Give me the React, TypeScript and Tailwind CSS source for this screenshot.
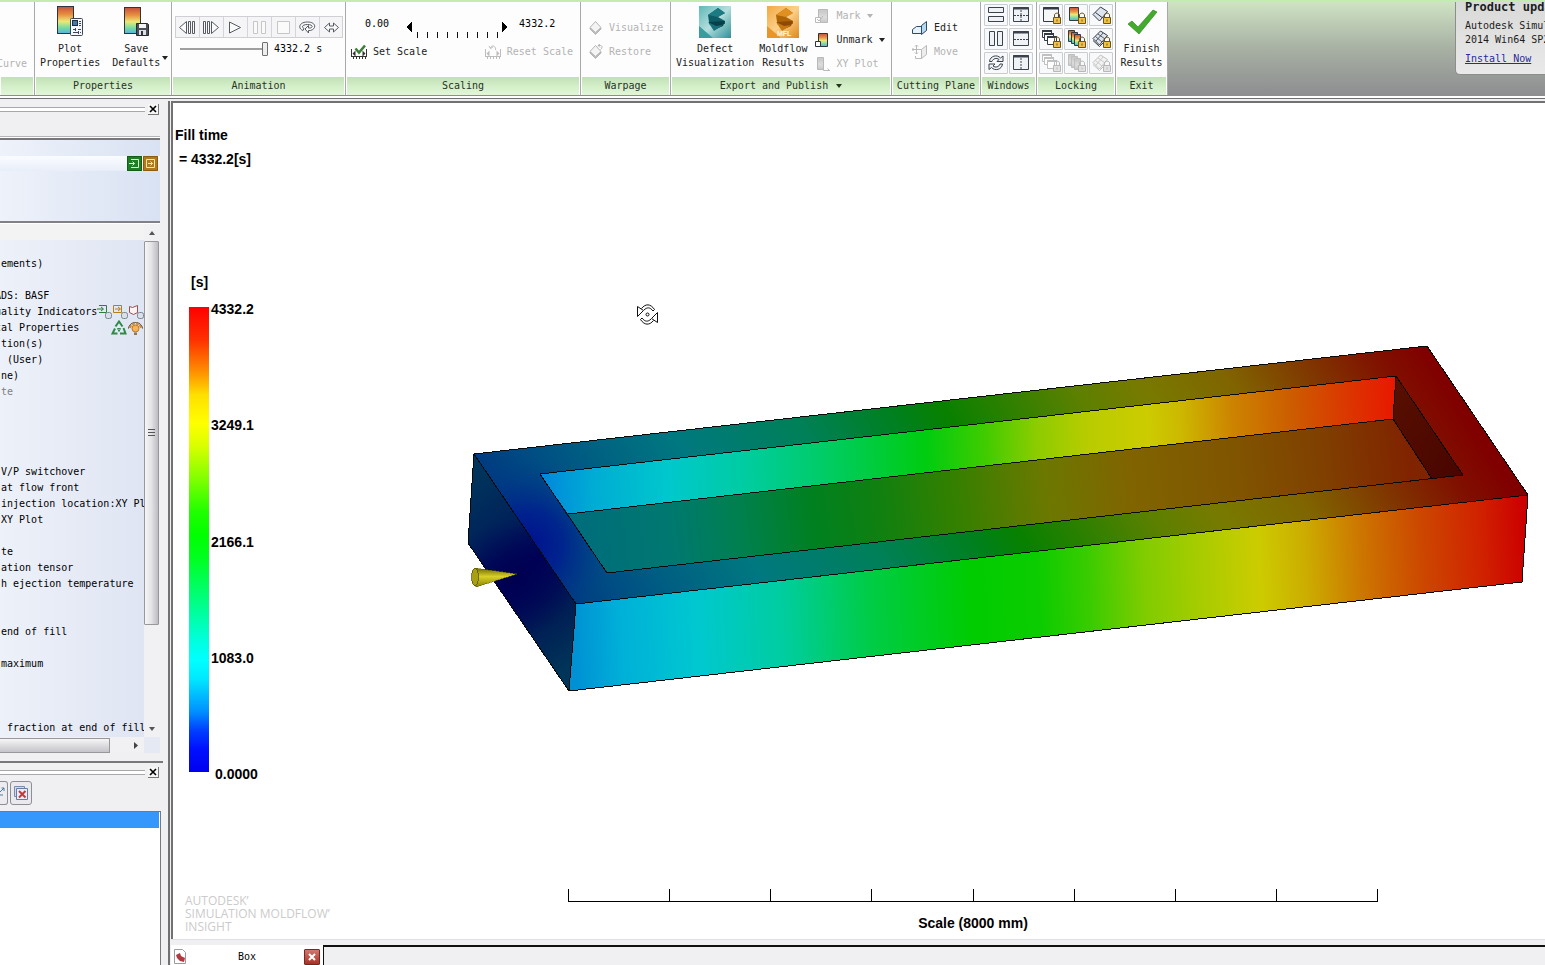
import React from "react";

type Kids = { children?: React.ReactNode };

/* ---------- small shared pieces ---------- */

function Caret() {
  return (
    <svg width="6" height="4" viewBox="0 0 6 4" className="shrink-0" aria-hidden="true">
      <path d="M0 0h6L3 4z" fill="currentColor" />
    </svg>
  );
}

function Group({ title, width, children, menu }: Kids & { title: string; width: string; menu?: boolean }) {
  return (
    <section className={`flex shrink-0 flex-col overflow-hidden border-r border-[#a9a9a9] bg-[#fdfdfd] ${width}`}>
      <div className="h-[75px]">{children}</div>
      <h2 className="mx-px flex h-[18px] items-center justify-center gap-2 whitespace-nowrap bg-linear-to-b from-[#c3dfb9] via-[#d3efc8] to-[#e2f6d8] text-[#27331f]">
        {title}
        {menu && <Caret />}
      </h2>
    </section>
  );
}

function Tool({ icon, label, off, menu }: { icon: React.ReactNode; label: string; off?: boolean; menu?: boolean }) {
  return (
    <button
      disabled={off}
      className={`flex h-6 items-center gap-[6px] whitespace-nowrap ${off ? "text-[#b3b3b3]" : "text-[#222]"}`}
    >
      {icon}
      <span>{label}</span>
      {menu && <Caret />}
    </button>
  );
}

function Big({ icon, lines, menu }: { icon: React.ReactNode; lines: string[]; menu?: boolean }) {
  return (
    <button className="flex flex-col items-center pt-1 leading-[14px] text-[#222]">
      <span className="flex h-9 items-start">{icon}</span>
      <span>{lines[0]}</span>
      <span className={menu ? "-mr-2 flex items-start gap-[2px]" : ""}>
        {lines[1]}
        {menu && <Caret />}
      </span>
    </button>
  );
}

/* ---------- icons ---------- */

function Rainbow({ id, dim }: { id: string; dim?: boolean }) {
  return (
    <linearGradient id={id} x1="0" y1="0" x2="0" y2="1">
      <stop offset="0" stopColor={dim ? "#c8c8c8" : "#c4503c"} />
      <stop offset=".3" stopColor={dim ? "#d0d0d0" : "#e89040"} />
      <stop offset=".55" stopColor={dim ? "#dcdcdc" : "#ece878"} />
      <stop offset=".78" stopColor={dim ? "#d4d4d4" : "#78dca0"} />
      <stop offset="1" stopColor={dim ? "#c4c4c4" : "#58b0e0"} />
    </linearGradient>
  );
}

function PlotPropertiesIcon() {
  return (
    <svg width="28" height="32" viewBox="0 0 28 32">
      <defs><Rainbow id="pp" /></defs>
      <rect x="1.500" y=".5" width="16" height="27" fill="url(#pp)" stroke="#30343c" />
      <rect x="14.500" y="12.500" width="12" height="17" rx="1" fill="#f4f8fb" stroke="#3c4654" />
      <rect x="16.500" y="14.500" width="5" height="5" fill="#4878a4" stroke="#1c2c44" />
      <path d="M23 15.500h2M23 17.500h2M23 19.500h2M17 23.500h3M22 23.500h3M17 26.500h5M24 26.500h1" stroke="#3c4654" />
      <path d="M19.500 22v3M22.500 25v3" stroke="#3c4654" />
    </svg>
  );
}

function SaveDefaultsIcon() {
  return (
    <svg width="28" height="32" viewBox="0 0 28 32">
      <defs><Rainbow id="sd" /></defs>
      <rect x="2.500" y="1.500" width="16" height="26" fill="url(#sd)" stroke="#30343c" />
      <path d="M14.500 17.500h11l1 1v11h-12z" fill="#4a4e56" stroke="#26282e" />
      <path d="M17 18h7v4h-7z" fill="#f4f4f4" />
      <path d="M17 24h7v5h-7z" fill="#dcdfe4" />
      <path d="M19 25h2v4h-2z" fill="#30343c" />
    </svg>
  );
}

const playerIcons: { name: string; off?: boolean; d: string }[] = [
  { name: "Step back", d: "M10.500 4.500v12L3.500 10.500zM12.500 4.500h2v12h-2zM16.500 4.500h2v12h-2z" },
  { name: "Step forward", d: "M3.500 4.500h2v12h-2zM7.500 4.500h2v12h-2zM11.500 4.500v12l7-6z" },
  { name: "Play", d: "M5.500 5v11l11-5.500z" },
  { name: "Pause", off: true, d: "M5.500 4.500h4v12h-4zM13.500 4.500h4v12h-4z" },
  { name: "Stop", off: true, d: "M5.500 4.500h12v12h-12z" },
  { name: "Loop", d: "M7 13.500C1.500 11.500 3 5 11.500 5s9.500 6.500 3 8.500h-2V16L9 12l3.500-3.500v2.500h2c3-1 2-3.500-3-3.500S5 10 8 11.500z" },
  { name: "Bounce", d: "M4.500 10.500l5-4.500v3h4V6l5 4.500-5 4.500v-3h-4v3z" },
];

function SetScaleIcon({ off }: { off?: boolean }) {
  const c = off ? "#bdbdbd" : "#333";
  return (
    <svg width="16" height="16" viewBox="0 0 16 16" fill="none" stroke={c}>
      <path d="M.5 5v8M15.500 5v8M0 12.500h16M2.500 13v2M5.500 13v2M8.500 13v2M11.500 13v2M14.500 13v2" />
      <path d="M1.500 9.500l3-3v6zM14.500 9.500l-3-3v6z" fill={c} stroke="none" />
      {off ? (
        <path d="M5.500 4.500c0-4 6-3 5 1.500M4 2l1.500 2.500L8 3" />
      ) : (
        <path d="M4.500 4.500l3.500 4L14 1.500" stroke="#3f7d3a" strokeWidth="2.500" />
      )}
    </svg>
  );
}

function DiamondIcon({ arrow }: { arrow?: boolean }) {
  return (
    <svg width="14" height="16" viewBox="0 0 14 16" fill="none" stroke="#b5b5b5">
      <path d="M6.500 1.500l5.500 6-5.500 5-5.500-5z" fill="#f4f4f4" />
      <path d="M1 8l5.500 5L12 8v1l-5.500 5.500L1 9z" fill="#c2c2c2" />
      {arrow && <path d="M9 1.500h2.500c2 0 2 3 0 4M11 0L9 1.500 11 3.500" />}
    </svg>
  );
}

function BladeIcon({ warm }: { warm?: boolean }) {
  const id = warm ? "warm" : "cool";
  return (
    <svg width="32" height="32" viewBox="0 0 32 32">
      <defs>
        <linearGradient id={id} x1="0" y1="0" x2="1" y2="1">
          <stop offset="0" stopColor={warm ? "#f2a840" : "#5fb8b8"} />
          <stop offset=".5" stopColor={warm ? "#fbd08a" : "#b4dedd"} />
          <stop offset="1" stopColor={warm ? "#e08818" : "#2f9096"} />
        </linearGradient>
      </defs>
      <path d="M0 0h32v32H0z" fill={`url(#${id})`} />
      <path d="M0 20L14 32H0z" fill={warm ? "#e8962c" : "#3a9c9f"} />
      <path d="M19 2L9 9l1 7 9 1 7 1v-3l-7-4 7-4z" fill={warm ? "#b06408" : "#0d5d66"} />
      <path d="M19 2L9 9l10 2 7-4z" fill={warm ? "#e09020" : "#1c7a82"} />
      <path d="M10 16l16-1-2 5-9 4 1-4-6-2z" fill={warm ? "#8c4a04" : "#083f48"} />
      <path d="M9 16l8 4 7-1-9 6z" fill={warm ? "#c87810" : "#18707a"} />
      {warm && (
        <text x="10" y="30" fontSize="7" fontWeight="700" fill="#fff6dc" fontFamily="Liberation Sans, sans-serif">MFL</text>
      )}
    </svg>
  );
}

function MarkIcon({ off, axis }: { off?: boolean; axis?: boolean }) {
  const id = axis ? "mkx" : off ? "mko" : "mk";
  return (
    <svg width="15" height="16" viewBox="0 0 15 16" fill="none" stroke={off ? "#b9b9b9" : "#2c3440"}>
      <defs><Rainbow id={id} dim={off} /></defs>
      {axis ? (
        <>
          <path d="M2.500 1.500h6v12h-6z" fill={`url(#${id})`} />
          <path d="M8.500 6v8.500H15M12.500 12.500l2 2" />
        </>
      ) : (
        <>
          <path d="M3.500 1.500h9v13h-9z" fill={`url(#${id})`} />
          <path d="M.5 9.500h5v5h-5z" fill="#fff" />
          {off && <path d="M2 11l2 2 4-5" />}
        </>
      )}
    </svg>
  );
}

function PlaneIcon({ move }: { move?: boolean }) {
  return (
    <svg width="16" height="16" viewBox="0 0 16 16" fill="none" stroke={move ? "#b9b9b9" : "#2c4a6c"}>
      {!move && <path d="M.5 9.500l4-3h6v7H.5z" fill="#e6f2fa" />}
      <path d="M9.500 5.500l5-4v9l-5 4z" fill={move ? "#ededed" : "#b4d8ee"} />
      {move && <path d="M4.500 1v9M0 5.500h9M3 2.500L4.500 1 6 2.500M3 8.500L4.500 10 6 8.500M1.500 4L0 5.500 1.500 7M3.500 12v2.500h6" />}
    </svg>
  );
}

const windowIcons: { name: string; node: React.ReactNode }[] = [
  { name: "Tile horizontally", node: <path d="M3.500 2.500h15v5h-15zM3.500 11.500h15v5h-15z" /> },
  { name: "Split both", node: <><path d="M3.500 2.500h15v14h-15z" /><path d="M3 3.500h16" strokeWidth="2" /><path d="M11 5v12M4 10.500h14" strokeDasharray="2 1" /></> },
  { name: "Tile vertically", node: <path d="M4.500 2.500h5v14h-5zM12.500 2.500h5v14h-5z" /> },
  { name: "Split horizontally", node: <><path d="M3.500 2.500h15v14h-15z" /><path d="M3 3.500h16" strokeWidth="2" /><path d="M4 10.500h14" strokeDasharray="2 1" /></> },
  { name: "Refresh views", node: <><path d="M4.500 8.500C5 3 12 1 15.500 5L18 3v5.500h-6l2-2c-2.500-2-6-1-7 2z" /><path d="M17.500 11c-.5 5.500-7.500 7.500-11 3.500L4 16.500V11h6l-2 2c2.500 2 6 1 7-2z" /></> },
  { name: "Split vertically", node: <><path d="M3.500 2.500h15v14h-15z" /><path d="M3 3.500h16" strokeWidth="2" /><path d="M11 5v12" strokeDasharray="2 1" /></> },
];

function LockGlyph({ off }: { off?: boolean }) {
  return (
    <g stroke={off ? "#b8b8b8" : "#6a5420"}>
      <path d="M14.500 12.500V10c0-2.500 5-2.500 5 0v2.500" fill="none" />
      <path d="M13.500 12.500h7v6h-7z" fill={off ? "#e2e2e2" : "#f2c044"} />
      <path d="M17 14.500v2" />
    </g>
  );
}

function LockIcon({ kind, row }: { kind: number; row: number }) {
  const off = row === 2;
  const stack = row > 0;
  const c = off ? "#c0c0c0" : "#343a44";
  const id = `lk${row}`;
  return (
    <svg width="22" height="20" viewBox="0 0 22 20" fill="none" stroke={c}>
      {kind === 0 && !stack && <><path d="M3.500 2.500h15v14h-15z" fill="#f4f6f8" /><path d="M3 3.500h16" strokeWidth="2" /></>}
      {kind === 0 && stack && (
        <>
          <path d="M2.500 1.500h9v7h-9z" fill="#fff" /><path d="M2 2h10" strokeWidth="2" />
          <path d="M4.500 4.500h9v7h-9z" fill="#fff" /><path d="M4 5h10" strokeWidth="2" />
          <path d="M7.500 7.500h9v8h-9z" fill="#fff" /><path d="M7 8h10" strokeWidth="2" />
        </>
      )}
      {kind === 1 && (
        <>
          <defs><Rainbow id={id} dim={off} /></defs>
          {stack && <path d="M3.500 1.500h6v11h-6z" fill={`url(#${id})`} />}
          {stack && <path d="M6.500 3.500h6v11h-6z" fill={`url(#${id})`} />}
          {stack ? <path d="M9.500 5.500h6v11h-6z" fill={`url(#${id})`} /> : <path d="M4.500 2.500h9v13h-9z" fill={`url(#${id})`} />}
        </>
      )}
      {kind === 2 && (
        <>
          <path d="M3 9.500L10.500 2l7 4.500-8 9.500z" fill={off ? "#f2f2f2" : "#dfe5ee"} />
          {stack ? <path d="M5.500 7.500l6.500 5.500M8 5l7 5M6 12l7-8" strokeWidth=".8" /> : <path d="M5.500 7.500l6.500 5" />}
          {stack && <path d="M3 11.500l6.500 6 4-4" />}
        </>
      )}
      <LockGlyph off={off} />
    </svg>
  );
}

/* ---------- ribbon ---------- */

const cell = "flex h-[22px] w-[24px] items-center justify-center rounded-[1px] border border-[#c9ccd0] bg-[#f8f9fa]";

function Ribbon() {
  return (
    <header className="flex h-[96px] shrink-0 overflow-hidden border-t-2 border-[#c5ecb0] bg-linear-to-b from-[#cfe3c4] via-[#a7b0a3] to-[#8d8d90] pb-px">
      <Group title="" width="w-[35px]">
        <div className="flex h-full items-end justify-end pr-[7px] pb-[6px] text-[#b3b3b3]">Curve</div>
      </Group>

      <Group title="Properties" width="w-[137px]">
        <div className="flex gap-[12px] pl-[5px]">
          <Big icon={<PlotPropertiesIcon />} lines={["Plot", "Properties"]} />
          <Big icon={<SaveDefaultsIcon />} lines={["Save", "Defaults"]} menu />
        </div>
      </Group>

      <Group title="Animation" width="w-[174px]">
        <div className="flex flex-col gap-[3px] pt-[14px] pr-[2px] pl-[3px]">
          <div className="flex border border-[#cfcfd4] bg-[#f5f5f8]">
            {playerIcons.map((p) => (
              <button
                key={p.name}
                aria-label={p.name}
                disabled={p.off}
                className="flex h-5 flex-1 items-center justify-center border-r border-[#d4d4da] last:border-r-0"
              >
                <svg width="23" height="20" viewBox="0 0 23 20" fill="#fafafa" stroke={p.off ? "#c6c6c6" : "#555a60"}>
                  <path d={p.d} />
                </svg>
              </button>
            ))}
          </div>
          <label className="flex items-center gap-[6px] pl-[5px]">
            <input
              type="range"
              aria-label="Animation time"
              defaultValue={100}
              className="h-4 w-[88px] appearance-none bg-transparent [&::-webkit-slider-runnable-track]:h-[2px] [&::-webkit-slider-runnable-track]:bg-[#a0a0a0] [&::-webkit-slider-thumb]:-mt-[6px] [&::-webkit-slider-thumb]:h-[14px] [&::-webkit-slider-thumb]:w-[6px] [&::-webkit-slider-thumb]:appearance-none [&::-webkit-slider-thumb]:rounded-[1px] [&::-webkit-slider-thumb]:border [&::-webkit-slider-thumb]:border-[#707070] [&::-webkit-slider-thumb]:bg-[#eee]"
            />
            <span className="text-black">4332.2 s</span>
          </label>
        </div>
      </Group>

      <Group title="Scaling" width="w-[235px]">
        <div className="flex h-[35px] items-center pt-[8px] pl-[19px] text-black">
          <span>0.00</span>
          <svg width="104" height="28" viewBox="406 10 104 28" className="mr-[10px] ml-[16px]" shapeRendering="crispEdges">
            <path d="M408 27l5-6v12zM508 27l-5-6v12z" />
            <path d="M418.500 32v6M428.500 32v6M438.500 32v6M448.500 32v6M458.500 32v6M468.500 32v6M478.500 32v6M488.500 32v6M498.500 32v6" stroke="#111" />
          </svg>
          <span>4332.2</span>
        </div>
        <div className="flex justify-between pt-[3px] pr-[7px] pl-[5px]">
          <Tool icon={<SetScaleIcon />} label="Set Scale" />
          <Tool icon={<SetScaleIcon off />} label="Reset Scale" off />
        </div>
      </Group>

      <Group title="Warpage" width="w-[90px]">
        <div className="flex flex-col pt-[14px] pl-[8px]">
          <Tool icon={<DiamondIcon />} label="Visualize" off />
          <Tool icon={<DiamondIcon arrow />} label="Restore" off />
        </div>
      </Group>

      <Group title="Export and Publish" width="w-[221px]" menu>
        <div className="flex pl-[5px]">
          <Big icon={<BladeIcon />} lines={["Defect", "Visualization"]} />
          <div className="pl-[5px]">
            <Big icon={<BladeIcon warm />} lines={["Moldflow", "Results"]} />
          </div>
          <div className="flex flex-col pt-[2px] pl-[8px]">
            <Tool icon={<MarkIcon off />} label="Mark" off menu />
            <Tool icon={<MarkIcon />} label="Unmark" menu />
            <Tool icon={<MarkIcon off axis />} label="XY Plot" off />
          </div>
        </div>
      </Group>

      <Group title="Cutting Plane" width="w-[89px]">
        <div className="flex flex-col pt-[14px] pl-[20px]">
          <Tool icon={<PlaneIcon />} label="Edit" />
          <Tool icon={<PlaneIcon move />} label="Move" off />
        </div>
      </Group>

      <Group title="Windows" width="w-[56px]">
        <div className="grid grid-cols-[24px_24px] gap-x-px gap-y-[2px] pt-[2px] pl-[3px]">
          {windowIcons.map((w) => (
            <button key={w.name} aria-label={w.name} className={cell}>
              <svg width="22" height="20" viewBox="0 0 22 20" fill="#f0f3f6" stroke="#3c434d">{w.node}</svg>
            </button>
          ))}
        </div>
      </Group>

      <Group title="Locking" width="w-[79px]">
        <div className="grid grid-cols-[24px_24px_24px] gap-x-px gap-y-[2px] pt-[2px] pl-[2px]">
          {[0, 1, 2].map((row) =>
            [0, 1, 2].map((kind) => (
              <button
                key={`${row}${kind}`}
                aria-label={`${row === 0 ? "Lock" : row === 1 ? "Lock all" : "Unlock all"} ${["view", "plot", "model"][kind]}`}
                disabled={row === 2}
                className={cell}
              >
                <LockIcon kind={kind} row={row} />
              </button>
            ))
          )}
        </div>
      </Group>

      <Group title="Exit" width="w-[52px]">
        <div className="flex justify-center">
          <Big
            icon={
              <svg width="32" height="32" viewBox="0 0 32 32">
                <path d="M2 18l4-3 6 6L27 4l4 2L13 28z" fill="#43ab2c" stroke="#2f8a20" strokeWidth=".7" />
              </svg>
            }
            lines={["Finish", "Results"]}
          />
        </div>
      </Group>

      <div className="flex-1" />

      <aside className="h-[73px] w-[90px] shrink-0 overflow-hidden rounded-bl-[5px] border-b border-l border-[#8b8e8b] bg-linear-to-b from-[#d9dad8] to-[#e9e9e9] pl-[9px] whitespace-nowrap text-[#1c1c1c]">
        <h2 className="text-[12px] leading-[10px] font-bold">Product update</h2>
        <p className="pt-[7px] leading-[14px]">
          Autodesk Simulation
          <br />
          2014 Win64 SP2
        </p>
        <a href="#install" className="block pt-[5px] leading-[14px] text-[#2a2a9c] underline">Install Now</a>
      </aside>
    </header>
  );
}

/* ---------- side panels ---------- */

function PanelTitle() {
  return (
    <div className="flex h-[10px] shrink-0 items-center gap-[3px] pr-[9px]">
      <div className="h-[5px] flex-1 border-y border-[#a8a8ac] bg-white" />
      <button aria-label="Close panel" className="flex h-[11px] w-[11px] items-center justify-center border-r border-b border-[#777] bg-[#f6f6f6]">
        <svg width="8" height="8" viewBox="0 0 8 8"><path d="M1 1l6 6M7 1L1 7" stroke="#000" strokeWidth="1.600" /></svg>
      </button>
    </div>
  );
}

function StepIcon({ out }: { out?: boolean }) {
  return (
    <svg width="15" height="15" viewBox="0 0 15 15" fill="none">
      <path d="M0 0h15v15H0z" fill={out ? "#b07a1c" : "#1f7d24"} />
      <path d="M.5.5h14v14H.5z" stroke={out ? "#8a5c10" : "#125c18"} />
      <path d={out ? "M3.500 3.500h8v8h-8zM5 7.500h4.500M7.500 5.500l2 2-2 2" : "M4 3.500h7.500v8H4M2 7.500h5.500M5.500 5.500l2 2-2 2"} stroke={out ? "#ffe7a0" : "#d8f5c8"} />
    </svg>
  );
}

function SmallBox({ tone, kind }: { tone: string; kind: number }) {
  return (
    <svg width="16" height="16" viewBox="0 0 16 16" fill="none" stroke={tone}>
      {kind === 0 && <path d="M2 1.500h7.500v7H2M0 5h6M4 3l2.500 2L4 7" />}
      {kind === 1 && <path d="M.5 1.500h8v7h-8zM2 5h5M5 3l2.500 2L5 7" />}
      {kind === 2 && <path d="M.5 2.500l3 1 5-2v7l-4 2-4-2z" fill="#fbf3f3" />}
      <rect x="8.500" y="8.500" width="6" height="6" rx="2" fill="#d9e0ea" stroke="#7a8492" />
    </svg>
  );
}

const rows: { text: string; dim?: boolean; icons?: "quality" | "eco" }[] = [
  { text: "" }, { text: "" }, { text: " ements)" }, { text: "" }, { text: "ADS: BASF" },
  { text: "uality Indicators", icons: "quality" },
  { text: "tal Properties", icons: "eco" },
  { text: " tion(s)" }, { text: "  (User)" }, { text: " ne)" }, { text: " te", dim: true },
  { text: "" }, { text: "" }, { text: "" }, { text: "" },
  { text: " V/P switchover" }, { text: " at flow front" }, { text: " injection location:XY Plot" }, { text: " XY Plot" },
  { text: "" }, { text: " te" }, { text: " ation tensor" }, { text: " h ejection temperature" },
  { text: "" }, { text: "" }, { text: " end of fill" }, { text: "" }, { text: " maximum" },
  { text: "" }, { text: "" }, { text: "" }, { text: "  fraction at end of fill" },
];

function Tree() {
  return (
    <div className="mr-[8px] flex h-[514px] shrink-0 border-t border-white">
      <div className="min-w-0 flex-1 overflow-hidden bg-linear-to-r from-[#edf1f9] to-[#dfe5f3]">
        <div className="h-4 bg-[#f3f3f4]" />
        <ul className="-mt-4 -ml-[5px] text-black">
          {rows.map((r, i) => (
            <li key={i} className={`flex h-4 items-center leading-4 whitespace-pre ${r.dim ? "text-[#808080]" : ""}`}>
              <span className="flex-1 overflow-visible">{r.text}</span>
              {r.icons === "quality" && (
                <span className="flex shrink-0">
                  <SmallBox tone="#2f7d3a" kind={0} />
                  <SmallBox tone="#b4801c" kind={1} />
                  <SmallBox tone="#9a5050" kind={2} />
                </span>
              )}
              {r.icons === "eco" && (
                <span className="flex shrink-0">
                  <svg width="16" height="16" viewBox="0 0 16 16" fill="none" stroke="#2f8a48" strokeWidth="2">
                    <path d="M4.500 6.500L8 1.500l3.500 5M12.500 8l2 5.500H9M6.500 13.500h-5l2.500-5" />
                    <path d="M6.500 8.500h3l-1.500 3z" strokeWidth="1" />
                  </svg>
                  <svg width="17" height="16" viewBox="0 0 17 16" fill="none">
                    <path d="M1.500 8.500c1-8 13-8 14 0" stroke="#4a3c30" />
                    <path d="M3 8c1-6 10-6 11 0" stroke="#c88a3c" strokeWidth="2" strokeDasharray="3 1" />
                    <circle cx="8.500" cy="8.500" r="3.500" fill="#f3b55c" stroke="#c07818" />
                    <path d="M7 12.500h3V15H7z" fill="#8a7a5a" />
                  </svg>
                </span>
              )}
            </li>
          ))}
        </ul>
      </div>
      <div className="flex w-4 shrink-0 flex-col items-start bg-[#f1f0f2]">
        <button aria-label="Scroll up" className="flex h-[17px] w-[15px] items-center justify-center text-[#555]">
          <svg width="6" height="4" viewBox="0 0 6 4"><path d="M0 4h6L3 0z" fill="currentColor" /></svg>
        </button>
        <div className="flex h-[384px] w-[15px] items-center justify-center rounded-[1px] border border-[#97979c] bg-linear-to-r from-[#f6f6f7] via-[#e3e3e6] to-[#bcbcc2]">
          <svg width="7" height="8" viewBox="0 0 7 8"><path d="M0 .5h7M0 3.500h7M0 6.500h7" stroke="#555" /></svg>
        </div>
        <button aria-label="Scroll down" className="mt-auto flex h-4 w-[15px] items-center justify-center text-[#555]"><Caret /></button>
      </div>
    </div>
  );
}

function SidePanels() {
  return (
    <aside className="flex w-[168px] shrink-0 flex-col overflow-hidden bg-[#f0eff2]">
      <div className="pt-[5px]"><PanelTitle /></div>
      <div className="mt-[22px] mr-[8px] h-[4px] shrink-0 border-t border-b-2 border-t-[#b4b4b8] border-b-[#77777c] bg-white" />
      <div className="mr-[8px] flex h-[81px] shrink-0 flex-col bg-linear-to-r from-[#eef2fa] to-[#d9e2f3] pt-[16px]">
        <div className="flex h-[15px] items-center justify-end gap-px bg-linear-to-b from-[#fafcff] to-[#e8eef9] pr-[2px]">
          <StepIcon />
          <StepIcon out />
        </div>
      </div>
      <div className="mr-[8px] h-[2px] shrink-0 bg-[#808086]" />
      <Tree />
      <div className="mr-[8px] flex h-4 shrink-0 items-center bg-[#f1f0f2]">
        <div className="h-[15px] w-[110px] border border-l-0 border-[#97979c] bg-linear-to-b from-[#f6f6f7] to-[#c4c4ca]" />
        <button aria-label="Scroll right" className="flex flex-1 justify-center pl-[17px]">
          <svg width="4" height="7" viewBox="0 0 4 7"><path d="M0 0v7l4-3.500z" fill="#444" /></svg>
        </button>
        <div className="h-4 w-4 bg-[#e4e9f4]" />
      </div>
      <div className="mt-[8px] mr-[5px] h-[2px] shrink-0 bg-[#77777c]" />
      <div className="pt-[4px]"><PanelTitle /></div>
      <div className="mt-[4px] flex h-[24px] shrink-0 gap-[2px]">
        <button aria-label="Expand layer" className="flex w-[8px] items-center rounded-r-[3px] border border-l-0 border-[#8e8e94] bg-[#ececf0]">
          <svg width="6" height="12" viewBox="0 0 6 12" fill="none" stroke="#4a7a9a"><path d="M0 5l4-4M1.500 1H4v3M0 8h3" /></svg>
        </button>
        <button aria-label="Delete layer" className="flex w-[22px] items-center justify-center rounded-[3px] border border-[#8e8e94] bg-[#e9e9ee]">
          <svg width="16" height="16" viewBox="0 0 16 16">
            <path d="M1.500 1.500h10v10h-10z" fill="#cfdbec" stroke="#7a8cae" />
            <path d="M3.500 3.500h11v11h-11z" fill="#e8eef7" stroke="#6a7ca4" />
            <path d="M6 6l6.500 6.500M12.500 6L6 12.500" stroke="#c03a3a" strokeWidth="2" />
          </svg>
        </button>
      </div>
      <div className="mt-[6px] mr-[7px] flex-1 border-t border-r border-[#77777c] bg-white pr-px">
        <div className="h-[16px] bg-[#3597fc]" />
      </div>
    </aside>
  );
}

/* ---------- result viewport ---------- */

function Stops({ list }: { list: [number, string][] }) {
  return <>{list.map(([o, c], i) => <stop key={i} offset={o} stopColor={c} />)}</>;
}

const topStops: [number, string][] = [
  [0, "#003a80"], [0.07, "#005084"], [0.12, "#006082"], [0.21, "#007880"], [0.34, "#008058"], [0.45, "#008018"],
  [0.49, "#088000"], [0.55, "#2a8000"], [0.63, "#5c8000"], [0.7, "#787a00"], [0.79, "#806400"], [0.88, "#803400"],
  [0.95, "#801000"], [1, "#800000"],
];
const frontStops: [number, string][] = [
  [0, "#0090d4"], [0.05, "#00b0d8"], [0.13, "#00c8d0"], [0.22, "#00cda0"], [0.31, "#00cc48"], [0.42, "#00cc00"],
  [0.49, "#0ccc00"], [0.54, "#38cc00"], [0.6, "#80cc00"], [0.66, "#a8cc00"], [0.72, "#cccc00"], [0.77, "#ccac00"],
  [0.83, "#cc7400"], [0.89, "#cc4800"], [0.95, "#d02400"], [1, "#cc0000"],
];
const wallStops: [number, string][] = [
  [0, "#0088dc"], [0.06, "#00acd4"], [0.15, "#00c8cc"], [0.24, "#00cca0"], [0.34, "#00cc60"], [0.45, "#00cc10"],
  [0.52, "#40cc00"], [0.58, "#8ccc00"], [0.64, "#b8cc00"], [0.71, "#cccc00"], [0.75, "#ccb800"], [0.81, "#cc8400"],
  [0.88, "#cc5c00"], [0.95, "#dc3400"], [1, "#e81800"],
];
const floorStops: [number, string][] = [
  [0, "#006c7c"], [0.12, "#007870"], [0.2, "#008050"], [0.29, "#008020"], [0.37, "#108010"], [0.46, "#348000"],
  [0.57, "#6c7800"], [0.67, "#806400"], [0.8, "#805400"], [0.9, "#804000"], [1, "#802400"],
];

function Model() {
  const top = "474,454 1427,346 1528,495 576,604";
  const end = "474,454 576,604 569,691 468,543";
  return (
    <svg viewBox="365 103 1180 760" className="block w-full" role="img" aria-label="Fill time result on box model" shapeRendering="crispEdges">
      <defs>
        <linearGradient id="gTop" gradientUnits="userSpaceOnUse" x1="474" y1="460" x2="1213" y2="5"><Stops list={topStops} /></linearGradient>
        <linearGradient id="gFront" gradientUnits="userSpaceOnUse" x1="573" y1="640" x2="1528" y2="590"><Stops list={frontStops} /></linearGradient>
        <linearGradient id="gWall" gradientUnits="userSpaceOnUse" x1="542" y1="480" x2="1396" y2="440"><Stops list={wallStops} /></linearGradient>
        <linearGradient id="gFloor" gradientUnits="userSpaceOnUse" x1="570" y1="540" x2="1405" y2="440"><Stops list={floorStops} /></linearGradient>
        <linearGradient id="gEnd" gradientUnits="userSpaceOnUse" x1="470" y1="480" x2="590" y2="650">
          <Stops list={[[0, "#00345c"], [0.3, "#00205a"], [0.5, "#000058"], [0.75, "#001c54"], [1, "#003458"]]} />
        </linearGradient>
        <radialGradient id="gGate" gradientUnits="userSpaceOnUse" cx="528" cy="545" r="85">
          <stop offset="0" stopColor="#001090" />
          <stop offset=".4" stopColor="#001c90" stopOpacity=".8" />
          <stop offset="1" stopColor="#003a88" stopOpacity="0" />
        </radialGradient>
        <radialGradient id="gGateEnd" gradientUnits="userSpaceOnUse" cx="516" cy="578" r="60">
          <stop offset="0" stopColor="#000050" />
          <stop offset="1" stopColor="#000058" stopOpacity="0" />
        </radialGradient>
        <linearGradient id="gSide" x1="0" y1="0" x2="1" y2="1"><Stops list={[[0, "#581000"], [1, "#480400"]]} /></linearGradient>
        <linearGradient id="gCone" x1="0" y1="0" x2="0" y2="1"><Stops list={[[0, "#6c6800"], [0.45, "#d8d028"], [1, "#8a8400"]]} /></linearGradient>
      </defs>
      <g stroke="none">
        <polygon points={top} fill="url(#gTop)" />
        <polygon points={top} fill="url(#gGate)" />
        <polygon points={end} fill="url(#gEnd)" />
        <polygon points={end} fill="url(#gGateEnd)" />
        <polygon points="576,604 1528,495 1522,582 569,691" fill="url(#gFront)" />
        <polygon points="540,474 1396,376 1393,419 568,514" fill="url(#gWall)" />
        <polygon points="568,514 1393,419 1432,479 607,573" fill="url(#gFloor)" />
        <polygon points="1396,376 1463,475 1432,479 1393,419" fill="url(#gSide)" />
      </g>
      <g fill="none" stroke="#0a0a0a" strokeWidth="1">
        <path d="M474 454L1427 346L1528 495L1522 582L569 691L468 543ZM474 454L576 604L569 691M576 604L1528 495" />
        <path d="M540 474L1396 376L1463 475L607 573ZM568 514L1393 419L1432 479M1396 376L1393 419" />
      </g>
      <path d="M474 568L517 574L476 587Z" fill="url(#gCone)" stroke="#5a5600" strokeWidth=".5" />
      <ellipse cx="475" cy="577" rx="3.500" ry="9" fill="#a8a010" stroke="#4a4600" strokeWidth=".7" />
      <g fill="none" stroke="#111" shapeRendering="auto">
        <circle cx="647.500" cy="314.500" r="1.500" />
        <path d="M641.500 308.500c4-5 9-5 13 1l-1.500 1.500c-3-4-6-4-9-1" />
        <path d="M637.500 306.500v10l6-6z" fill="#fff" />
        <path d="M653.500 320.500c-4 5-9 5-13-1l1.500-1.500c3 4 6 4 9 1" />
        <path d="M657.500 322.500v-10l-6 6z" fill="#fff" />
      </g>
    </svg>
  );
}

function Viewport() {
  return (
    <section className="flex min-h-0 flex-1 border-t-2 border-l-2 border-[#717174] bg-white text-[14px] font-bold text-black [font-family:'Liberation_Sans',Arial,sans-serif]">
      <div className="flex w-[192px] shrink-0 flex-col pb-[6px] pl-px">
        <h1 className="pt-5 pl-px leading-6">Fill time</h1>
        <p className="pl-[5px] leading-6">= 4332.2[s]</p>
        <p className="mt-[103px] pl-[17px] leading-4">[s]</p>
        <div className="mt-[11px] flex h-[481px] shrink-0 gap-[2px] pl-[15px]">
          <div className="my-[6px] h-[465px] w-5 bg-[linear-gradient(to_bottom,#f00_0%,#ff3000_7%,#ff9000_14%,#ffe000_19%,#ff0_25%,#d8ff00_30%,#80ff00_37%,#20ff00_44%,#0f0_49%,#00ff20_54%,#00ff80_63%,#00ffe0_72%,#0ff_76%,#00e8ff_80%,#0090ff_87%,#0040ff_91%,#0010ff_95%,#0000f0_100%)]" />
          <ol className="flex flex-col justify-between leading-4">
            <li>4332.2</li>
            <li>3249.1</li>
            <li>2166.1</li>
            <li>1083.0</li>
            <li className="pl-1">0.0000</li>
          </ol>
        </div>
        <p className="mt-auto pl-[11px] text-[12px] leading-[13px] font-normal whitespace-nowrap text-[#cbcbcb] [font-family:'Open_Sans',sans-serif]">
          AUTODESK’
          <br />
          SIMULATION MOLDFLOW’
          <br />
          INSIGHT
        </p>
      </div>
      <div className="min-w-0 flex-1">
        <Model />
        <div className="mt-[26px] mr-[167px] ml-[203px]">
          <div className="flex h-[13px] border-b border-l border-black">
            {[0, 1, 2, 3, 4, 5, 6, 7].map((n) => <div key={n} className="flex-1 border-r border-black" />)}
          </div>
          <p className="pt-[13px] text-center leading-4">Scale (8000 mm)</p>
        </div>
      </div>
    </section>
  );
}

function Tabs() {
  return (
    <nav className="flex h-[26px] shrink-0 border-t border-[#e0e0e4] pt-[5px]">
      <div className="flex w-[152px] items-center bg-white pt-[3px] pr-[3px] pl-[3px]">
        <svg width="12" height="15" viewBox="0 0 12 15">
          <path d="M.5.5h8l3 3v11H.5z" fill="#fff" stroke="#9a9aa0" />
          <path d="M2 6l4-2 1 3 4 2-1 4-4-1-3-3z" fill="#b03a40" />
        </svg>
        <a href="#box" className="flex-1 pl-1 text-center text-black">Box</a>
        <button aria-label="Close tab" className="flex h-4 w-4 items-center justify-center rounded-[1px] border border-[#7c2620] bg-linear-to-b from-[#d07870] to-[#a83028]">
          <svg width="8" height="8" viewBox="0 0 8 8"><path d="M1 1l6 6M7 1L1 7" stroke="#fff" strokeWidth="2" /></svg>
        </button>
      </div>
      <div className="flex-1 border-t-2 border-l border-[#111] bg-[#f0eff2]" />
    </nav>
  );
}

export default function App() {
  return (
    <div className="flex h-screen flex-col overflow-hidden bg-[#f0eff2] text-[10px] leading-[14px] [font-family:'DejaVu_Sans_Mono','Liberation_Mono',monospace]">
      <Ribbon />
      <div className="h-[3px] shrink-0 border-b border-[#6e6e72] bg-white" />
      <div className="flex min-h-0 flex-1">
        <SidePanels />
        <main className="mt-[2px] flex min-w-0 flex-1 flex-col border-l-2 border-[#717174] pl-px">
          <Viewport />
          <Tabs />
        </main>
      </div>
    </div>
  );
}
